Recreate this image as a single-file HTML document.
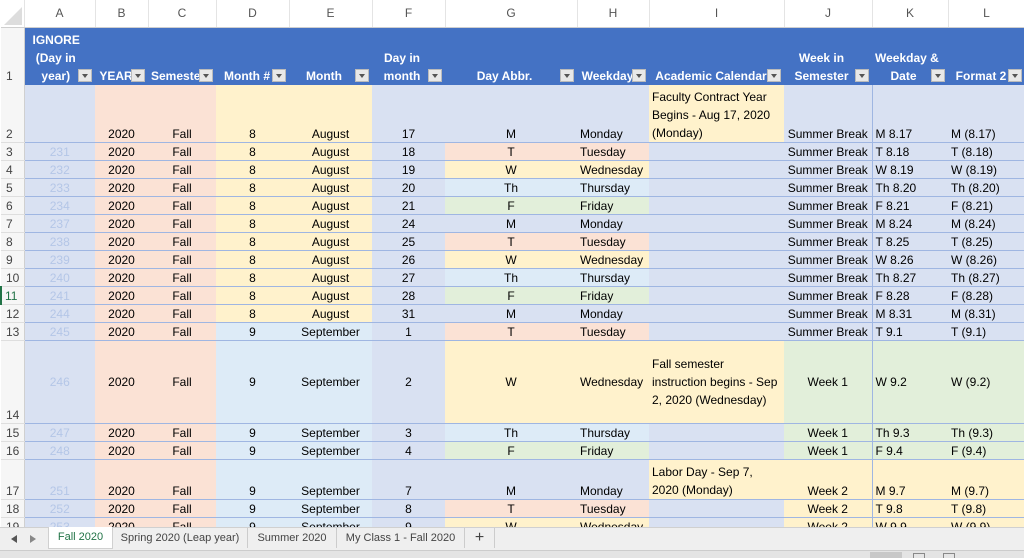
<!DOCTYPE html>
<html style="overflow:hidden"><head><meta charset="utf-8">
<style>
*{margin:0;padding:0;box-sizing:border-box}
html,body{width:1024px;height:558px;overflow:hidden}
body{background:#fff;font-family:"Liberation Sans",Arial,sans-serif;font-size:12px;color:#000;position:relative}
table{border-collapse:collapse;table-layout:fixed;position:absolute;left:0;top:0;width:1024px}
td{white-space:nowrap;overflow:hidden;padding:0 3px;vertical-align:bottom;text-align:center;border-bottom:1px solid #9fb6e2;line-height:16px}
tr.ch td{height:27px;background:#fff;color:#555;border-bottom:1px solid #cfcfcf;border-right:1px solid #e4e4e4;vertical-align:middle;font-size:12px}
td.rh{background:#f6f6f6;color:#444;text-align:left;padding-left:5px;border-right:1px solid #d0d0d0;border-bottom:1px solid #dedede}
tr.h td{background:#4472c4;color:#fff;font-weight:bold;height:58px;position:relative;border-bottom:none;padding-right:16px;line-height:18px}
tr.h td.rh{background:#f6f6f6;color:#444;font-weight:normal}
.fb{position:absolute;right:3px;bottom:3px;width:14px;height:13px;background:#e8e8e8;border:1px solid #bbb}
.fb:after{content:"";position:absolute;left:3px;top:4px;border-left:3.5px solid transparent;border-right:3.5px solid transparent;border-top:4px solid #555}
.a{background:#d9e1f2;color:#b4c6e7}
.p{background:#fbe2d5}
.y{background:#fff2cc}
.b{background:#ddebf7}
.g{background:#e2efda}
.s{background:#d9e1f2}
.l{text-align:left}
.k{border-left:1px solid #9fb6e2}
.mid td{vertical-align:middle}
.mid td.rh{vertical-align:bottom}
.wrap{white-space:normal;line-height:18px}
tr.r td{height:18px}
</style></head><body>
<table>
<colgroup><col style="width:23px"><col style="width:71px"><col style="width:53px"><col style="width:68px"><col style="width:73px"><col style="width:83px"><col style="width:73px"><col style="width:132px"><col style="width:72px"><col style="width:135px"><col style="width:88px"><col style="width:76px"><col style="width:77px"></colgroup>
<tr class="ch"><td class="rh" style="background:#fff;position:relative"><div style="position:absolute;right:2px;bottom:2px;border-left:18px solid transparent;border-bottom:18px solid #ddd"></div></td><td>A</td><td>B</td><td>C</td><td>D</td><td>E</td><td>F</td><td>G</td><td>H</td><td>I</td><td>J</td><td>K</td><td>L</td></tr>
<tr class="h"><td class="rh">1</td>
<td style="white-space:normal;padding-left:8px">IGNORE<br>(Day in<br>year)<div class="fb"></div></td>
<td style="padding-right:14px">YEAR<div class="fb"></div></td>
<td style="padding-right:14px">Semester<div class="fb"></div></td>
<td style="padding-right:14px">Month #<div class="fb"></div></td>
<td>Month<div class="fb"></div></td>
<td>Day in<br>month<div class="fb"></div></td>
<td>Day Abbr.<div class="fb"></div></td>
<td style="padding-right:14px">Weekday<div class="fb"></div></td>
<td style="padding-right:14px">Academic Calendar<div class="fb"></div></td>
<td>Week in<br>Semester<div class="fb"></div></td>
<td>Weekday &amp;<br>Date<div class="fb"></div></td>
<td style="padding-right:14px">Format 2<div class="fb"></div></td></tr>
<tr style="height:57px"><td class="rh">2</td><td class="a"></td><td class="p">2020</td><td class="p">Fall</td><td class="y">8</td><td class="y">August</td><td class="s">17</td><td class="s">M</td><td class="s l">Monday</td><td class="y l wrap">Faculty Contract Year Begins - Aug 17, 2020 (Monday)</td><td class="s">Summer Break</td><td class="s l k">M 8.17</td><td class="s l">M (8.17)</td></tr>
<tr class="r"><td class="rh">3</td><td class="a">231</td><td class="p">2020</td><td class="p">Fall</td><td class="y">8</td><td class="y">August</td><td class="s">18</td><td class="p">T</td><td class="p l">Tuesday</td><td class="s"></td><td class="s">Summer Break</td><td class="s l k">T 8.18</td><td class="s l">T (8.18)</td></tr>
<tr class="r"><td class="rh">4</td><td class="a">232</td><td class="p">2020</td><td class="p">Fall</td><td class="y">8</td><td class="y">August</td><td class="s">19</td><td class="y">W</td><td class="y l">Wednesday</td><td class="s"></td><td class="s">Summer Break</td><td class="s l k">W 8.19</td><td class="s l">W (8.19)</td></tr>
<tr class="r"><td class="rh">5</td><td class="a">233</td><td class="p">2020</td><td class="p">Fall</td><td class="y">8</td><td class="y">August</td><td class="s">20</td><td class="b">Th</td><td class="b l">Thursday</td><td class="s"></td><td class="s">Summer Break</td><td class="s l k">Th 8.20</td><td class="s l">Th (8.20)</td></tr>
<tr class="r"><td class="rh">6</td><td class="a">234</td><td class="p">2020</td><td class="p">Fall</td><td class="y">8</td><td class="y">August</td><td class="s">21</td><td class="g">F</td><td class="g l">Friday</td><td class="s"></td><td class="s">Summer Break</td><td class="s l k">F 8.21</td><td class="s l">F (8.21)</td></tr>
<tr class="r"><td class="rh">7</td><td class="a">237</td><td class="p">2020</td><td class="p">Fall</td><td class="y">8</td><td class="y">August</td><td class="s">24</td><td class="s">M</td><td class="s l">Monday</td><td class="s"></td><td class="s">Summer Break</td><td class="s l k">M 8.24</td><td class="s l">M (8.24)</td></tr>
<tr class="r"><td class="rh">8</td><td class="a">238</td><td class="p">2020</td><td class="p">Fall</td><td class="y">8</td><td class="y">August</td><td class="s">25</td><td class="p">T</td><td class="p l">Tuesday</td><td class="s"></td><td class="s">Summer Break</td><td class="s l k">T 8.25</td><td class="s l">T (8.25)</td></tr>
<tr class="r"><td class="rh">9</td><td class="a">239</td><td class="p">2020</td><td class="p">Fall</td><td class="y">8</td><td class="y">August</td><td class="s">26</td><td class="y">W</td><td class="y l">Wednesday</td><td class="s"></td><td class="s">Summer Break</td><td class="s l k">W 8.26</td><td class="s l">W (8.26)</td></tr>
<tr class="r"><td class="rh">10</td><td class="a">240</td><td class="p">2020</td><td class="p">Fall</td><td class="y">8</td><td class="y">August</td><td class="s">27</td><td class="b">Th</td><td class="b l">Thursday</td><td class="s"></td><td class="s">Summer Break</td><td class="s l k">Th 8.27</td><td class="s l">Th (8.27)</td></tr>
<tr class="r"><td class="rh" style="color:#217346;border-left:2px solid #217346;padding-left:3px">11</td><td class="a">241</td><td class="p">2020</td><td class="p">Fall</td><td class="y">8</td><td class="y">August</td><td class="s">28</td><td class="g">F</td><td class="g l">Friday</td><td class="s"></td><td class="s">Summer Break</td><td class="s l k">F 8.28</td><td class="s l">F (8.28)</td></tr>
<tr class="r"><td class="rh">12</td><td class="a">244</td><td class="p">2020</td><td class="p">Fall</td><td class="y">8</td><td class="y">August</td><td class="s">31</td><td class="s">M</td><td class="s l">Monday</td><td class="s"></td><td class="s">Summer Break</td><td class="s l k">M 8.31</td><td class="s l">M (8.31)</td></tr>
<tr class="r"><td class="rh">13</td><td class="a">245</td><td class="p">2020</td><td class="p">Fall</td><td class="b">9</td><td class="b">September</td><td class="s">1</td><td class="p">T</td><td class="p l">Tuesday</td><td class="s"></td><td class="s">Summer Break</td><td class="s l k">T 9.1</td><td class="s l">T (9.1)</td></tr>
<tr class="mid" style="height:83px"><td class="rh">14</td><td class="a">246</td><td class="p">2020</td><td class="p">Fall</td><td class="b">9</td><td class="b">September</td><td class="s">2</td><td class="y">W</td><td class="y l">Wednesday</td><td class="y l wrap">Fall semester instruction begins - Sep 2, 2020 (Wednesday)</td><td class="g">Week 1</td><td class="g l k">W 9.2</td><td class="g l">W (9.2)</td></tr>
<tr class="r"><td class="rh">15</td><td class="a">247</td><td class="p">2020</td><td class="p">Fall</td><td class="b">9</td><td class="b">September</td><td class="s">3</td><td class="b">Th</td><td class="b l">Thursday</td><td class="s"></td><td class="g">Week 1</td><td class="g l k">Th 9.3</td><td class="g l">Th (9.3)</td></tr>
<tr class="r"><td class="rh">16</td><td class="a">248</td><td class="p">2020</td><td class="p">Fall</td><td class="b">9</td><td class="b">September</td><td class="s">4</td><td class="g">F</td><td class="g l">Friday</td><td class="s"></td><td class="g">Week 1</td><td class="g l k">F 9.4</td><td class="g l">F (9.4)</td></tr>
<tr style="height:40px"><td class="rh">17</td><td class="a">251</td><td class="p">2020</td><td class="p">Fall</td><td class="b">9</td><td class="b">September</td><td class="s">7</td><td class="s">M</td><td class="s l">Monday</td><td class="y l wrap">Labor Day - Sep 7, 2020 (Monday)</td><td class="y">Week 2</td><td class="y l k">M 9.7</td><td class="y l">M (9.7)</td></tr>
<tr class="r"><td class="rh">18</td><td class="a">252</td><td class="p">2020</td><td class="p">Fall</td><td class="b">9</td><td class="b">September</td><td class="s">8</td><td class="p">T</td><td class="p l">Tuesday</td><td class="s"></td><td class="y">Week 2</td><td class="y l k">T 9.8</td><td class="y l">T (9.8)</td></tr>
<tr class="r"><td class="rh">19</td><td class="a">253</td><td class="p">2020</td><td class="p">Fall</td><td class="b">9</td><td class="b">September</td><td class="s">9</td><td class="y">W</td><td class="y l">Wednesday</td><td class="s"></td><td class="y">Week 2</td><td class="y l k">W 9.9</td><td class="y l">W (9.9)</td></tr>
</table>
<div style="position:absolute;z-index:2;left:0;top:527px;width:1024px;height:23px;background:#efefef;border-top:1px solid #d0d0d0;font-size:11px;color:#444">
 <div style="position:absolute;left:11px;top:7px;border-top:4px solid transparent;border-bottom:4px solid transparent;border-right:6px solid #555"></div>
 <div style="position:absolute;left:30px;top:7px;border-top:4px solid transparent;border-bottom:4px solid transparent;border-left:6px solid #888"></div>
 <div style="position:absolute;left:48px;top:-1px;width:65px;height:22px;background:#fff;border:1px solid #d0d0d0;border-top:none;color:#217346;text-align:center;line-height:20px">Fall 2020</div>
 <div style="position:absolute;left:113px;width:135px;top:0;line-height:20px;text-align:center;border-right:1px solid #ccc;height:20px">Spring 2020 (Leap year)</div>
 <div style="position:absolute;left:248px;width:89px;top:0;line-height:20px;text-align:center;border-right:1px solid #ccc;height:20px">Summer 2020</div>
 <div style="position:absolute;left:337px;width:128px;top:0;line-height:20px;text-align:center;border-right:1px solid #ccc;height:20px">My Class 1 - Fall 2020</div>
 <div style="position:absolute;left:465px;width:30px;top:0;line-height:20px;text-align:center;border-right:1px solid #ccc;height:20px;font-size:16px">+</div>
</div>
<div style="position:absolute;z-index:2;left:0;top:550px;width:1024px;height:8px;background:#e4e4e4;border-top:1px solid #ccc">
 <div style="position:absolute;left:870px;top:1px;width:32px;height:7px;background:#c8c8c8"></div>
 <div style="position:absolute;left:913px;top:2px;width:12px;height:6px;border:1px solid #888"></div>
 <div style="position:absolute;left:943px;top:2px;width:12px;height:6px;border:1px solid #888"></div>
</div>
</body></html>
